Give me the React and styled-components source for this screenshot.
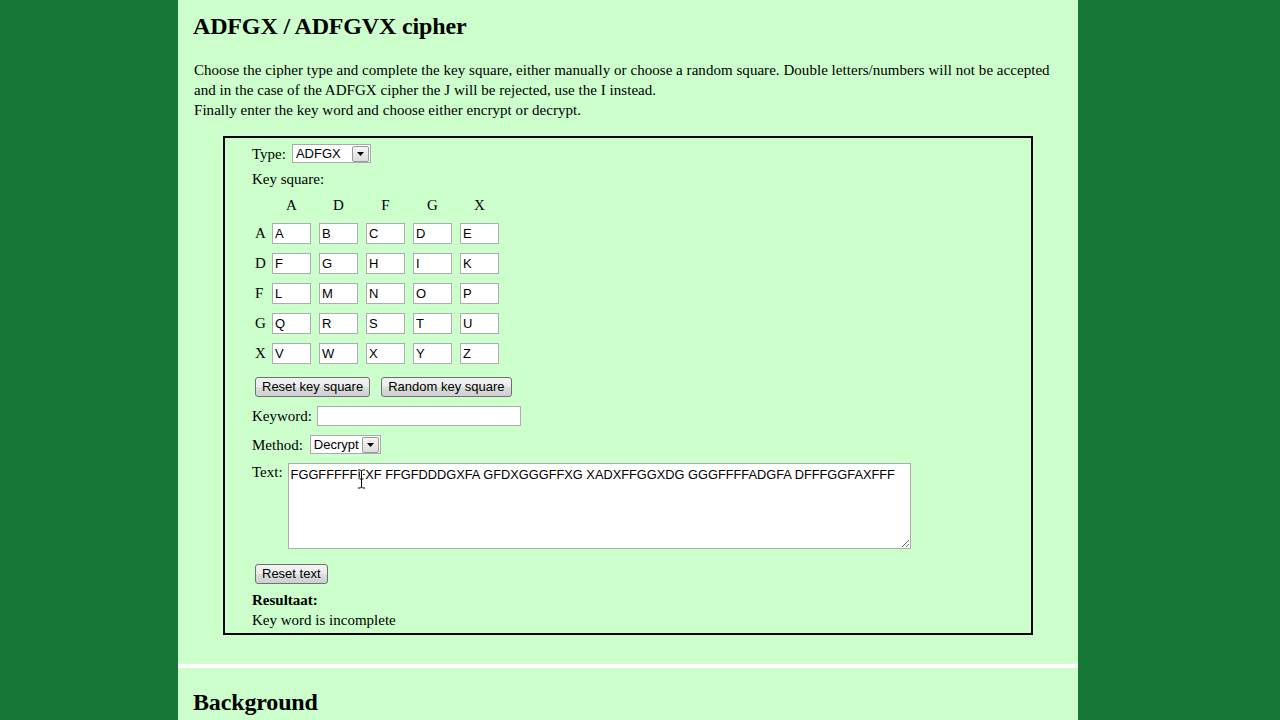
import React from "react";
import styled, { createGlobalStyle } from "styled-components";

const GlobalStyle = createGlobalStyle`
  html, body {
    margin: 0;
    padding: 0;
    overflow: hidden;
    background: #167834;
  }
  body {
    font-family: "Liberation Serif", "Times New Roman", serif;
    color: #000;
  }
`;

const Column = styled.div`
  width: 900px;
  min-height: 100vh;
  margin-left: 178px;
  background: #ccffcc;
`;

const Section = styled.section`
  padding: ${(p) => p.$top}px 15px 0;
`;

const Title = styled.h2`
  margin: 0;
  font-size: 24px;
  line-height: 28px;
  font-weight: bold;
  letter-spacing: -0.15px;
`;

const Intro = styled.p`
  margin: 20px 0 0;
  padding-left: 1px;
  font-size: 15px;
  line-height: 20px;
  letter-spacing: 0.04px;
`;

const Panel = styled.div`
  box-sizing: border-box;
  width: 810px;
  margin: 16px 0 0 30px;
  border: 2px solid #000;
  padding: 6px 0 4px 27px;
  font-size: 15px;
`;

const Row = styled.div`
  display: flex;
  align-items: ${(p) => (p.$top ? "flex-start" : "center")};
  gap: ${(p) => p.$gap ?? 5}px;
  margin-top: ${(p) => p.$mt ?? 0}px;
`;

const Label = styled.span`
  font-size: 15px;
  line-height: 18px;
`;

const Line = styled.div`
  margin-top: ${(p) => p.$mt ?? 0}px;
  font-size: 15px;
  line-height: 18px;
  font-weight: ${(p) => (p.$bold ? "bold" : "normal")};
`;

const SelectBox = styled.div`
  box-sizing: border-box;
  display: flex;
  align-items: center;
  justify-content: space-between;
  width: ${(p) => p.$w}px;
  height: ${(p) => p.$h}px;
  border: 1px solid #a7abb0;
  background: #fff;
  padding: 0 1px 0 3px;
  font-family: "Liberation Sans", Arial, sans-serif;
  font-size: 13px;
`;

const ArrowButton = styled.span`
  box-sizing: border-box;
  display: flex;
  align-items: center;
  justify-content: center;
  width: 17px;
  height: 16px;
  border: 1px solid #9a9a9a;
  border-radius: 2px;
  background: linear-gradient(#f6f6f6, #dcdcdc);
`;

const Select = ({ value, w, h }) => (
  <SelectBox $w={w} $h={h}>
    <span>{value}</span>
    <ArrowButton>
      <svg width="7" height="4" viewBox="0 0 7 4">
        <polygon points="0,0 7,0 3.5,4" fill="#000" />
      </svg>
    </ArrowButton>
  </SelectBox>
);

const Grid = styled.div`
  display: grid;
  grid-template-columns: 20px repeat(5, 47px);
  grid-template-rows: 17px repeat(5, 21px);
  row-gap: 9px;
  margin-top: 9px;
  align-items: center;
`;

const HeadCell = styled.span`
  width: 39px;
  text-align: center;
  font-size: 15px;
  line-height: 17px;
`;

const RowLabel = styled.span`
  padding-left: 3px;
  font-size: 15px;
  line-height: 21px;
`;

const Field = styled.input`
  box-sizing: border-box;
  width: ${(p) => p.$w}px;
  height: ${(p) => p.$h}px;
  margin: 0;
  border: 1px solid #abadb3;
  padding: 0 2px;
  background: #fff;
  font-family: "Liberation Sans", Arial, sans-serif;
  font-size: 13px;
  color: #000;
  outline: none;
`;

const Button = styled.button`
  box-sizing: border-box;
  height: 20px;
  margin: 0;
  padding: 0 6px;
  border: 1px solid #707070;
  border-radius: 3px;
  background: linear-gradient(#f2f2f2 0%, #ebebeb 50%, #dddddd 50%, #cfcfcf 100%);
  font-family: "Liberation Sans", Arial, sans-serif;
  font-size: 13px;
  color: #000;
  line-height: 18px;
`;

const ButtonRow = styled.div`
  display: flex;
  gap: 11px;
  margin: ${(p) => p.$mt}px 0 0 3px;
`;

const TextWrap = styled.div`
  position: relative;
`;

const TextArea = styled.textarea`
  box-sizing: border-box;
  display: block;
  width: 623px;
  height: 86px;
  margin: 0;
  padding: 3px 2px 2px;
  border: 1px solid #abadb3;
  background: #fff;
  font-family: "Liberation Sans", Arial, sans-serif;
  font-size: 12.8px;
  line-height: 15px;
  color: #000;
  outline: none;
`;

const Cursor = styled.svg`
  position: absolute;
  left: 69px;
  top: 6px;
  pointer-events: none;
`;

const Divider = styled.div`
  height: 4px;
  margin-top: 29px;
  background: #fff;
`;

const letters = ["A", "D", "F", "G", "X"];
const square = [
  ["A", "B", "C", "D", "E"],
  ["F", "G", "H", "I", "K"],
  ["L", "M", "N", "O", "P"],
  ["Q", "R", "S", "T", "U"],
  ["V", "W", "X", "Y", "Z"],
];

export default function App() {
  return (
    <>
      <GlobalStyle />
      <Column>
        <Section $top={12}>
          <Title>ADFGX / ADFGVX cipher</Title>
          <Intro>
            Choose the cipher type and complete the key square, either manually or choose a random square. Double letters/numbers will not be accepted
            <br />
            and in the case of the ADFGX cipher the J will be rejected, use the I instead.
            <br />
            Finally enter the key word and choose either encrypt or decrypt.
          </Intro>
          <Panel>
            <Row $gap={6}>
              <Label>Type:</Label>
              <Select value="ADFGX" w={79} h={19} />
            </Row>
            <Line $mt={7}>Key square:</Line>
            <Grid>
              <span />
              {letters.map((l) => (
                <HeadCell key={l}>{l}</HeadCell>
              ))}
              {square.map((row, i) => (
                <React.Fragment key={i}>
                  <RowLabel>{letters[i]}</RowLabel>
                  {row.map((c) => (
                    <Field key={c} $w={39} $h={21} defaultValue={c} />
                  ))}
                </React.Fragment>
              ))}
            </Grid>
            <ButtonRow $mt={13}>
              <Button>Reset key square</Button>
              <Button>Random key square</Button>
            </ButtonRow>
            <Row $mt={9} $gap={5}>
              <Label>Keyword:</Label>
              <Field $w={204} $h={20} defaultValue="" />
            </Row>
            <Row $mt={9} $gap={7}>
              <Label>Method:</Label>
              <Select value="Decrypt" w={71} h={19} />
            </Row>
            <Row $mt={9} $gap={5} $top>
              <Label>Text:</Label>
              <TextWrap>
                <TextArea defaultValue="FGGFFFFFFXF FFGFDDDGXFA GFDXGGGFFXG XADXFFGGXDG GGGFFFFADGFA DFFFGGFAXFFF" />
                <Cursor width="9" height="20" viewBox="0 0 9 20">
                  <path
                    d="M1 1 H3.5 L4.5 2 L5.5 1 H8 M4.5 2 V18 M1 19 H3.5 L4.5 18 L5.5 19 H8 M2.5 10 H6.5"
                    fill="none"
                    stroke="#fff"
                    strokeWidth="3"
                  />
                  <path
                    d="M1 1 H3.5 L4.5 2 L5.5 1 H8 M4.5 2 V18 M1 19 H3.5 L4.5 18 L5.5 19 H8 M2.5 10 H6.5"
                    fill="none"
                    stroke="#000"
                    strokeWidth="1"
                  />
                </Cursor>
              </TextWrap>
            </Row>
            <ButtonRow $mt={15}>
              <Button>Reset text</Button>
            </ButtonRow>
            <Line $mt={7} $bold>
              Resultaat:
            </Line>
            <Line $mt={2}>Key word is incomplete</Line>
          </Panel>
        </Section>
        <Divider />
        <Section $top={20}>
          <Title>Background</Title>
        </Section>
      </Column>
    </>
  );
}
